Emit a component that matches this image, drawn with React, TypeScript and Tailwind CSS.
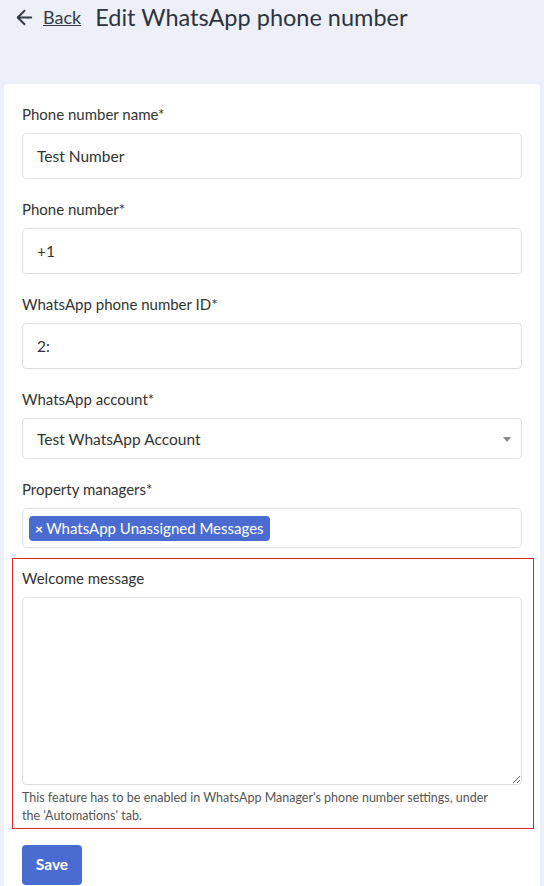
import { ArrowLeft } from "lucide-react";

const font = { fontFamily: 'Lato, "Noto Sans", sans-serif' };

const Field = ({ label, value }: { label: string; value: string }) => (
  <div className="flex flex-col gap-[9px] mb-[20px]">
    <label className="text-[15px] leading-[20px] text-[#333]">{label}</label>
    <div className="h-[46px] border border-[#dcdfe4] rounded-[4px] px-[14px] pt-[2px] flex items-center text-[15.5px] text-[#333]">
      {value}
    </div>
  </div>
);

export default function App() {
  return (
    <div style={font} className="min-h-[886px] bg-[#edf0f8] text-[#2d3440]">
      {/* header */}
      <div className="flex items-center h-[35px] pl-[13px] gap-[14px]">
        <div className="flex items-center gap-[7px]">
          <ArrowLeft size={23} strokeWidth={2} className="text-[#333a46]" />
          <a className="underline text-[18px] text-[#333a46]">Back</a>
        </div>
        <h1 className="text-[23.5px] text-[#2d3440]">Edit WhatsApp phone number</h1>
      </div>

      <div className="mt-[49px] mx-[4px] bg-white rounded-[4px] pt-[20px] pb-[10px] min-h-[802px]">
        <div className="px-[18px]">
          <Field label="Phone number name*" value="Test Number" />
          <Field label="Phone number*" value="+1" />
          <Field label="WhatsApp phone number ID*" value="2:" />

          <div className="flex flex-col gap-[9px] mb-[20px]">
            <label className="text-[15px] leading-[20px] text-[#333]">WhatsApp account*</label>
            <div className="h-[41px] border border-[#dcdfe4] rounded-[4px] pl-[14px] pr-[10px] pt-[2px] flex items-center justify-between text-[15.5px] text-[#333]">
              <span>Test WhatsApp Account</span>
              <span className="w-0 h-0 border-l-[4px] border-r-[4px] border-t-[5px] border-l-transparent border-r-transparent border-t-[#888]" />
            </div>
          </div>

          <div className="flex flex-col gap-[9px] mb-[10px]">
            <label className="text-[15px] leading-[20px] text-[#333]">Property managers*</label>
            <div className="h-[40px] border border-[#dcdfe4] rounded-[4px] px-[6px] flex items-center">
              <span className="bg-[#4a6cd0] text-white rounded-[4px] h-[25px] px-[6px] flex items-center gap-[3px] text-[15px]">
                <span className="text-[14px] font-bold">×</span>
                WhatsApp Unassigned Messages
              </span>
            </div>
          </div>
        </div>

        <div className="ml-[8px] mr-[6px] border border-[#e02424] pl-[9px] pr-[11px] pt-[9px] pb-[3px]">
          <div className="flex flex-col gap-[9px]">
            <label className="text-[15px] leading-[20px] text-[#333]">Welcome message</label>
            <textarea className="h-[188px] border border-[#dcdfe4] rounded-[4px] resize-y outline-none" />
          </div>
          <p className="text-[12.5px] leading-[18px] text-[#555] mt-[4px] max-w-[475px]">
            This feature has to be enabled in WhatsApp Manager's phone number settings, under the 'Automations' tab.
          </p>
        </div>

        <div className="px-[18px] mt-[16px]">
          <button className="bg-[#4a6cd0] text-white font-bold text-[15.5px] rounded-[4px] w-[60px] h-[40px]">
            Save
          </button>
        </div>
      </div>
    </div>
  );
}
